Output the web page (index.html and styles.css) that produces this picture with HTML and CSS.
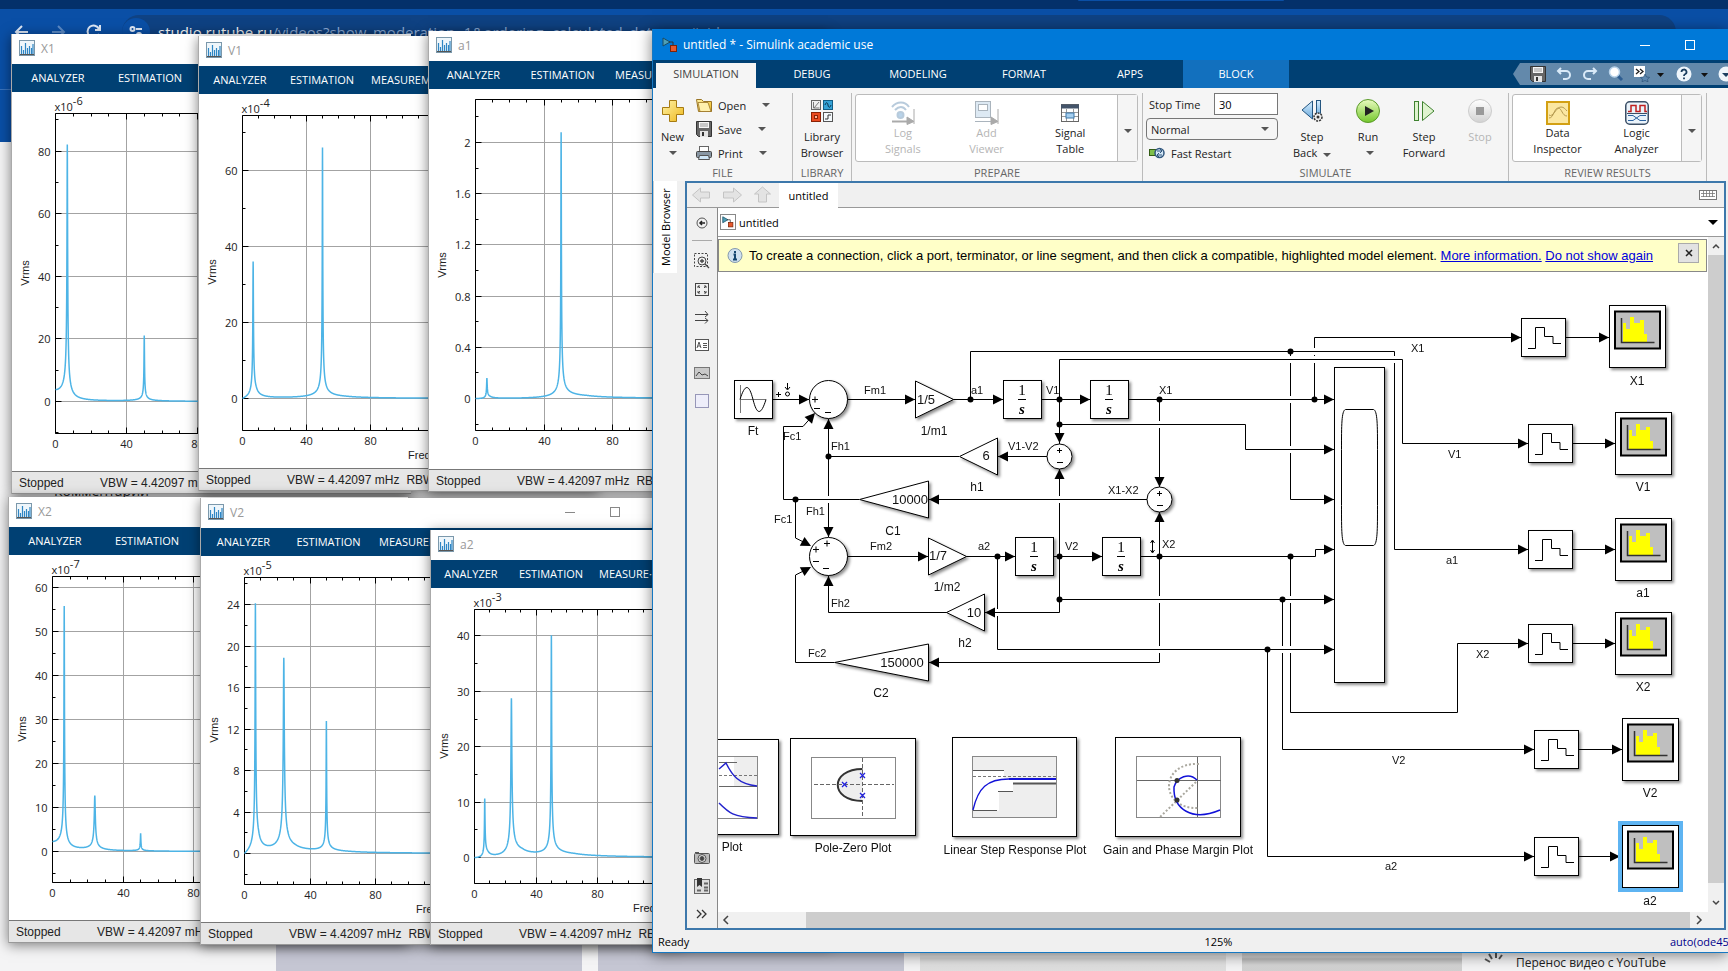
FILE: index.html
```html
<!DOCTYPE html>
<html lang="en">
<head>
    <meta charset="utf-8">
    <title>untitled * - Simulink academic use</title>
    <link rel="stylesheet" href="styles.css">
</head>
<body>
<!-- shared symbols -->
<svg class="defs" width="0" height="0" aria-hidden="true">
    <defs>
        <linearGradient id="gold" x1="0" y1="0" x2="1" y2="1"><stop offset="0" stop-color="#fff3a8"/><stop offset="1" stop-color="#eeb81c"/></linearGradient>
        <linearGradient id="green" x1="0" y1="0" x2="0" y2="1"><stop offset="0" stop-color="#e9fbc0"/><stop offset="1" stop-color="#74c82c"/></linearGradient>
        <linearGradient id="blue" x1="0" y1="0" x2="0" y2="1"><stop offset="0" stop-color="#d8efff"/><stop offset="1" stop-color="#6aa9dc"/></linearGradient>
        <linearGradient id="grey" x1="0" y1="0" x2="0" y2="1"><stop offset="0" stop-color="#ffffff"/><stop offset="1" stop-color="#d2d2d2"/></linearGradient>
        <filter id="drop" x="-20%" y="-20%" width="150%" height="150%"><feDropShadow dx="2" dy="2" stdDeviation="1.5" flood-color="#000" flood-opacity=".45"/></filter>
        <symbol id="spectrum" viewBox="0 0 16 16">
            <rect x=".5" y=".5" width="15" height="15" fill="#eef6fb" stroke="#7b98ab"/>
            <path d="M2.5 14V6M4.5 14v-4M6.5 14V3M8.5 14V8M10.5 14V6M12.5 14V8M14 14V4" stroke="#2f86c4" stroke-width="1.2"/>
            <path d="M1 14.5h14" stroke="#555"/>
        </symbol>
        <symbol id="model" viewBox="0 0 16 16">
            <path d="M1 1l7 4-7 4z" fill="#4f9fb5" stroke="#184d66"/>
            <path d="M7 5h4v4" fill="none" stroke="#333"/>
            <rect x="8.500" y="8.500" width="6" height="6" fill="#e8582c" stroke="#7c2408"/>
        </symbol>
        <symbol id="floppy" viewBox="0 0 16 16">
            <path d="M.5.5h15v15h-13l-2-2z" fill="#666" stroke="#333"/>
            <rect x="3" y="1" width="10" height="6" fill="#f5f5f5"/>
            <path d="M4 3h8M4 5h8" stroke="#999"/>
            <rect x="4" y="10" width="8" height="6" fill="#e5e5e5"/>
            <rect x="6" y="11" width="2" height="4" fill="#333"/>
        </symbol>
        <symbol id="integrator" viewBox="0 0 44 44" overflow="visible">
            <rect x=".5" y=".5" width="38" height="38" class="block"/>
            <path d="M15 19.500h8" class="thin"/>
            <text x="19" y="15" class="math">1</text>
            <text x="19" y="34" class="math italic">s</text>
        </symbol>
        <symbol id="hold" viewBox="0 0 50 44" overflow="visible">
            <rect x=".5" y=".5" width="44" height="38" class="block"/>
            <path d="M7 30.500h7.500v-21h9v9h8.500v7h8" class="thin"/>
        </symbol>
        <symbol id="analyzer" viewBox="0 0 62 68" overflow="visible">
            <rect x=".5" y=".5" width="56" height="62" class="block"/>
            <rect x="6" y="6.500" width="45" height="37" fill="#bfbfbf" stroke="#000" stroke-width="2"/>
            <path d="M14 37V18h3v6h4V12h4v6h6v-3h4v14h3v8z" fill="#ff0"/>
            <path d="M12.500 13v24.500h33" fill="none" stroke="#333" stroke-width="1.5"/>
        </symbol>
    </defs>
</svg>

<div class="desktop">

    <!-- browser in the background -->
    <div class="browser">
        <div class="tabstrip"><span class="browser-tab"></span></div>
        <div class="browser-bar">
            <svg width="110" height="36" viewBox="0 0 110 36" fill="none" stroke="#dfe9f7" stroke-width="2">
                <path d="M28 23H17M22 17l-6 6 6 6"/>
                <path d="M52 23h11M58 17l6 6-6 6" stroke="#5d8cc8"/>
                <path d="M99 20a6 6 0 1 0 0 5M100 16v5h-5"/>
            </svg>
            <div class="address">
                <span class="site"><svg width="14" height="14" viewBox="0 0 14 14" fill="none" stroke="#dfe9f7" stroke-width="2"><circle cx="3.500" cy="4" r="2"/><path d="M7 4h6M1 10h5"/><circle cx="10" cy="10" r="2"/></svg></span>
                <span>studio.rutube.ru<em>/videos?show_moderation=1&amp;ordering=calculated_date_asc#video</em></span>
            </div>
        </div>
    </div>
    <span class="comments">Комментарии</span>
    <div class="feed">
        <span class="thumb"></span>
        <span class="thumb"></span>
        <span class="thumb sheet"></span>
        <span class="thumb sheet"></span>
        <span class="transfer">
            <svg width="26" height="26" viewBox="0 0 26 26" stroke="#555" stroke-width="2"><path d="M3 14l5 3M7 9l3 5M14 8v5M20 10l-3 4"/></svg>
            Перенос видео с YouTube
        </span>
    </div>

    <!-- spectrum analyzer windows -->
    <section class="scope scope-x1">
        <header><svg width="16" height="16"><use href="#spectrum"/></svg>X1</header>
        <nav><button>ANALYZER</button><button>ESTIMATION</button></nav>
        <svg class="plot" data-plot="x1"></svg>
        <footer><span>Stopped</span><span>VBW = 4.42097 mHz</span></footer>
    </section>
    <section class="scope scope-v1">
        <header><svg width="16" height="16"><use href="#spectrum"/></svg>V1</header>
        <nav><button>ANALYZER</button><button>ESTIMATION</button><button>MEASUREMENTS</button></nav>
        <svg class="plot" data-plot="v1"></svg>
        <footer><span>Stopped</span><span>VBW = 4.42097 mHz</span><span>RBW</span></footer>
    </section>
    <section class="scope scope-a1">
        <header><svg width="16" height="16"><use href="#spectrum"/></svg>a1</header>
        <nav><button>ANALYZER</button><button>ESTIMATION</button><button>MEASUREMENTS</button></nav>
        <svg class="plot" data-plot="a1"></svg>
        <footer><span>Stopped</span><span>VBW = 4.42097 mHz</span><span>RBW</span></footer>
    </section>
    <section class="scope scope-x2">
        <header><svg width="16" height="16"><use href="#spectrum"/></svg>X2</header>
        <nav><button>ANALYZER</button><button>ESTIMATION</button><button>MEASUREMENTS</button></nav>
        <svg class="plot" data-plot="x2"></svg>
        <footer><span>Stopped</span><span>VBW = 4.42097 mHz</span></footer>
    </section>
    <section class="scope scope-v2">
        <header><svg width="16" height="16"><use href="#spectrum"/></svg>V2
            <span class="window-buttons">
                <svg width="45" height="30" fill="none" stroke="#888"><path d="M18 15.500h10"/></svg>
                <svg width="45" height="30" fill="none" stroke="#888"><rect x="18.500" y="10.500" width="9" height="9"/></svg>
                <svg width="45" height="30" fill="none" stroke="#888"><path d="M18 10l10 10M28 10L18 20"/></svg>
            </span>
        </header>
        <nav><button>ANALYZER</button><button>ESTIMATION</button><button>MEASUREMENTS</button></nav>
        <svg class="plot" data-plot="v2"></svg>
        <footer><span>Stopped</span><span>VBW = 4.42097 mHz</span><span>RBW</span></footer>
    </section>
    <section class="scope scope-a2">
        <header><svg width="16" height="16"><use href="#spectrum"/></svg>a2</header>
        <nav><button>ANALYZER</button><button>ESTIMATION</button><button>MEASURE···</button></nav>
        <svg class="plot" data-plot="a2"></svg>
        <footer><span>Stopped</span><span>VBW = 4.42097 mHz</span><span>RBW</span></footer>
    </section>

    <!-- simulink editor -->
    <main class="simulink">
        <header class="titlebar">
            <svg width="16" height="16"><use href="#model"/></svg>
            <span>untitled * - Simulink academic use</span>
            <span class="window-buttons">
                <svg width="45" height="30" fill="none" stroke="#fff"><path d="M18 15.500h10"/></svg>
                <svg width="45" height="30" fill="none" stroke="#fff"><rect x="18.500" y="10.500" width="9" height="9"/></svg>
            </span>
        </header>

        <nav class="tabs">
            <button class="active">SIMULATION</button>
            <button>DEBUG</button>
            <button>MODELING</button>
            <button>FORMAT</button>
            <button>APPS</button>
            <button class="block-tab">BLOCK</button>
            <div class="quick">
                <svg width="16" height="16"><use href="#floppy"/></svg>
                <svg width="16" height="16" viewBox="0 0 16 16" fill="none" stroke="#d9eaf8" stroke-width="2"><path d="M5 2L2 5l3 3M2 5h8a4 4 0 0 1 0 8H7"/></svg>
                <svg width="16" height="16" viewBox="0 0 16 16" fill="none" stroke="#d9eaf8" stroke-width="2"><path d="M11 2l3 3-3 3M14 5H6a4 4 0 0 0 0 8h3"/></svg>
                <svg width="16" height="16" viewBox="0 0 16 16"><path d="M9 9l5 5" stroke="#2d5d91" stroke-width="3"/><circle cx="6.500" cy="6" r="5" fill="#fff" stroke="#b9d3ea" stroke-width="1.5"/></svg>
                <svg width="32" height="16" viewBox="0 0 32 16"><rect width="11" height="11" fill="#fff"/><path d="M2 3l3 2.500L2 8M6 3l3 2.500L6 8" fill="none" stroke="#222" stroke-width="1.300"/><path d="M11 8l1.500 3 3 .3-2 2 .5 2.500-3-1.300-3 1.300.5-2.500-2-2 3-.3z" fill="#5c87b0" stroke="#23496f" stroke-width=".6"/><path d="M23 7h7l-3.500 4z" fill="#111"/></svg>
                <svg width="32" height="16" viewBox="0 0 32 16"><circle cx="8" cy="8" r="7.500" fill="#eef5fb"/><path d="M5.500 6a2.500 2.500 0 1 1 3.500 2.300c-.8.400-1 .8-1 1.700M8 11.500v1.700" fill="none" stroke="#1b3e60" stroke-width="1.800"/><path d="M25 7h7l-3.500 4z" fill="#111"/></svg>
                <svg width="16" height="16" viewBox="0 0 16 16"><circle cx="8" cy="8" r="7.500" fill="#eef5fb"/><path d="M4 7h8l-4 4z" fill="#1b3e60"/></svg>
            </div>
        </nav>

        <div class="ribbon">
            <section class="group file">
                <div class="tools">
                    <button class="tool new">
                        <svg width="22" height="22" viewBox="0 0 22 22"><path d="M7.500.5h7v7h7v7h-7v7h-7v-7h-7v-7h7z" fill="url(#gold)" stroke="#a67b12"/></svg>
                        <span>New</span><i class="caret"></i>
                    </button>
                    <div class="file-list">
                        <button><svg width="16" height="16" viewBox="0 0 16 16"><path d="M.5 2.500h5l2 2h8v10h-13z" fill="url(#gold)" stroke="#9a7526"/><path d="M2 5.500h10l3 9H4z" fill="#fff0ad" stroke="#9a7526" stroke-width=".8"/></svg>Open<i class="caret"></i></button>
                        <button><svg width="16" height="16"><use href="#floppy"/></svg>Save<i class="caret"></i></button>
                        <button><svg width="16" height="16" viewBox="0 0 16 16"><rect x="3.500" y="1.500" width="9" height="6" fill="#fff" stroke="#666"/><rect x=".5" y="6.500" width="15" height="6" rx="1" fill="#8896a3" stroke="#444"/><path d="M3.500 10.500h9l1 4h-11z" fill="#cfe6f7" stroke="#555"/></svg>Print<i class="caret"></i></button>
                    </div>
                </div>
                <h2>FILE</h2>
            </section>
            <section class="group library">
                <div class="tools">
                    <button class="tool">
                        <svg width="22" height="22" viewBox="0 0 22 22"><rect x=".5" y=".5" width="9" height="9" fill="#eee" stroke="#666"/><path d="M2.500 2v6h6M3 8l5-6" fill="none" stroke="#777"/><rect x="12.500" y=".5" width="9" height="9" fill="#35a2d6" stroke="#125e86"/><path d="M14 5c1-3 2.500-3 3 0s2 3 3 0" fill="none" stroke="#0b3550"/><rect x=".5" y="12.500" width="9" height="9" fill="#ea4a1f" stroke="#8b2206"/><rect x="3.500" y="15.500" width="3" height="3" fill="#ffb497" stroke="#8b2206"/><rect x="12.500" y="12.500" width="9" height="9" fill="#f4f9fc" stroke="#555"/><path d="M14 19h3v-4h3" fill="none" stroke="#333"/></svg>
                        <span>Library<br>Browser</span>
                    </button>
                </div>
                <h2>LIBRARY</h2>
            </section>
            <section class="group prepare">
                <div class="gallery">
                    <button class="tool" disabled>
                        <svg width="24" height="24" viewBox="0 0 24 24" fill="none" stroke="#b8cbdc" stroke-width="2"><path d="M1 6c5-6 13-6 17 0M4 9c4-4 8-4 11 0"/><circle cx="9.500" cy="14" r="3" fill="#b8d3ea"/><path d="M1 20.500h16" stroke="#aaa"/><path d="M16 16l7 4.500-7 3zM23 8v15" fill="#aaa" stroke="#aaa" stroke-width="1"/></svg>
                        <span>Log<br>Signals</span>
                    </button>
                    <button class="tool" disabled>
                        <svg width="24" height="24" viewBox="0 0 24 24" fill="none" stroke="#aab4bd"><rect x=".5" y=".5" width="15" height="16" fill="#dde9f3"/><rect x="3.500" y="3.500" width="9" height="6" fill="#fff"/><path d="M0 20.500h17"/><path d="M16 16l7 4.500-7 3zM23 8v15" fill="#aaa" stroke="#aaa"/></svg>
                        <span>Add<br>Viewer</span>
                    </button>
                    <button class="tool">
                        <svg width="24" height="24" viewBox="0 0 24 24"><rect x="3.500" y="3.500" width="17" height="17" fill="#fff" stroke="#666"/><path d="M3 5.500h18" stroke="#44546a" stroke-width="4"/><path d="M4 11.500h16M4 15.500h16M8.500 8v12M15.500 8v12" stroke="#999"/><rect x="8" y="12" width="8" height="5" fill="#a5cff0" stroke="#3c78aa"/></svg>
                        <span>Signal<br>Table</span>
                    </button>
                    <button class="more" aria-label="More"><i class="caret"></i></button>
                </div>
                <h2>PREPARE</h2>
            </section>
            <section class="group simulate">
                <div class="tools">
                    <div class="settings">
                        <div class="row"><label for="stop">Stop Time</label><input id="stop" type="text" value="30"></div>
                        <div class="select"><select aria-label="Simulation mode"><option>Normal</option></select><i class="caret"></i></div>
                        <button class="fast"><svg width="16" height="14" viewBox="0 0 16 14"><rect x=".5" y="3.500" width="6" height="6" fill="#7fc04a" stroke="#335c16"/><circle cx="10.500" cy="7" r="4.500" fill="#d4e8f7" stroke="#31577e" stroke-width="1.500"/><path d="M8 5h5M11 3l2 2-2 2M13 9H8M10 7L8 9l2 2" fill="none" stroke="#31577e"/></svg>Fast Restart</button>
                    </div>
                    <button class="tool">
                        <svg width="24" height="24" viewBox="0 0 24 24"><path d="M12.500 2v18L2 11z" fill="url(#blue)" stroke="#24557f"/><rect x="16.500" y="1.500" width="4" height="16" fill="url(#blue)" stroke="#24557f"/><circle cx="18" cy="18" r="4" fill="#eee" stroke="#333" stroke-width="1.500" stroke-dasharray="2 1"/><circle cx="18" cy="18" r="1.500" fill="#333"/></svg>
                        <span>Step<br>Back <i class="caret"></i></span>
                    </button>
                    <button class="tool">
                        <svg width="24" height="24" viewBox="0 0 24 24"><circle cx="12" cy="12" r="11.500" fill="url(#green)" stroke="#5a9a2a"/><path d="M9 7l9 5-9 5z" fill="#222"/></svg>
                        <span>Run</span><i class="caret"></i>
                    </button>
                    <button class="tool">
                        <svg width="24" height="24" viewBox="0 0 24 24"><rect x="2.500" y="2.500" width="4" height="19" fill="#dff3cf" stroke="#3f8230"/><path d="M10.500 2.500v19L22 12z" fill="#dff3cf" stroke="#3f8230"/></svg>
                        <span>Step<br>Forward</span>
                    </button>
                    <button class="tool" disabled>
                        <svg width="24" height="24" viewBox="0 0 24 24"><circle cx="12" cy="12" r="11.500" fill="url(#grey)" stroke="#ccc"/><rect x="8" y="8" width="8" height="8" fill="#999"/></svg>
                        <span>Stop</span>
                    </button>
                </div>
                <h2>SIMULATE</h2>
            </section>
            <section class="group review">
                <div class="gallery">
                    <button class="tool">
                        <svg width="24" height="24" viewBox="0 0 24 24"><rect x="1" y="1" width="22" height="22" fill="#fbe7a1" stroke="#d3a013" stroke-width="2"/><path d="M3 17c5 0 5-10 9-10s4 8 9 8M3 14c4 3 7-8 12-8 3 0 4 2 6 4" fill="none" stroke="#b59a50"/></svg>
                        <span>Data<br>Inspector</span>
                    </button>
                    <button class="tool">
                        <svg width="24" height="24" viewBox="0 0 24 24" fill="none"><rect x=".75" y=".75" width="22.500" height="22.500" rx="4" fill="#eaf3fa" stroke="#3c4f66" stroke-width="1.500"/><path d="M3 10.500h3v-6h5v6h4v-6h5v6h2" stroke="#c02020" stroke-width="1.500"/><path d="M2 12.500h20" stroke="#3c4f66"/><path d="M3 14.500h5l7 5h6M3 19.500h5l7-5h6" stroke="#2b62a0"/></svg>
                        <span>Logic<br>Analyzer</span>
                    </button>
                    <button class="more" aria-label="More"><i class="caret"></i></button>
                </div>
                <h2>REVIEW RESULTS</h2>
            </section>
        </div>

        <div class="body">
            <aside class="browser-pane"><button>Model Browser</button></aside>
            <div class="editor">
                <div class="doc-tabs">
                    <svg width="92" height="22" viewBox="0 0 92 22" fill="#e3e3e3" stroke="#c4c4c4"><path d="M5.500 11l8-7v4h9v6h-9v4z"/><path d="M54.500 11l-8-7v4h-10v6h10v4z"/><path d="M75.500 3l8 7h-4v8h-8v-8h-4z"/></svg>
                    <button>untitled</button>
                    <svg class="keyboard" width="18" height="10" viewBox="0 0 18 10" fill="#fff" stroke="#777"><rect x=".5" y=".5" width="17" height="9"/><path d="M2 3.500h14M2 6.500h14M4.500 1v6M7.500 1v6M10.500 1v6M13.500 1v6" stroke-width=".8"/></svg>
                </div>
                <div class="work">
                    <div class="palette">
                        <svg width="16" height="16" viewBox="0 0 16 16" fill="none" stroke="#555"><circle cx="8" cy="8" r="5"/><path d="M11 8H6M8 6L6 8l2 2" stroke="#222" stroke-width="1.500"/></svg>
                        <hr>
                        <svg width="16" height="16" viewBox="0 0 16 16" fill="none" stroke="#444"><rect x=".5" y=".5" width="13" height="13" stroke-dasharray="2 1.500"/><circle cx="8" cy="8" r="4" fill="#eee"/><path d="M8 6v4M6 8h4M11 11l4 4" stroke-width="1.300"/></svg>
                        <svg width="16" height="16" viewBox="0 0 16 16" fill="none" stroke="#444"><rect x="1.500" y="2.500" width="13" height="12"/><path d="M4 5l2 2M12 5l-2 2M4 12l2-2M12 12l-2-2M4 7V5h2M10 5h2v2M4 10v2h2M10 12h2v-2"/></svg>
                        <svg width="16" height="16" viewBox="0 0 16 16" fill="none" stroke="#444"><path d="M1 5.500h13M11 2l3 3.500L11 8M1 11.500h13M11 9l3 2.500-3 3"/></svg>
                        <svg width="16" height="16" viewBox="0 0 16 16" fill="none" stroke="#555"><rect x="1.500" y="2.500" width="13" height="11" fill="#fff"/><path d="M3 11l2-6 2 6M4 9h2M9 6.500h4M9 8.500h4M9 10.500h4"/></svg>
                        <svg width="16" height="16" viewBox="0 0 16 16" fill="none" stroke="#777"><rect x=".5" y="2.500" width="15" height="11" fill="#c9c9c9"/><path d="M2 11l3-4 3 3 3-1 3 2" stroke="#444"/></svg>
                        <svg width="16" height="16" viewBox="0 0 16 16"><rect x="1.500" y="1.500" width="13" height="13" fill="#eeeefa" stroke="#9797b8"/></svg>
                        <span class="fill"></span>
                        <svg width="16" height="16" viewBox="0 0 16 16" fill="#bbb" stroke="#555"><rect x=".5" y="3.500" width="15" height="10" rx="1"/><circle cx="8" cy="8.500" r="4" fill="#ddd"/><circle cx="8" cy="8.500" r="2" fill="#444"/><path d="M1 2.500h4"/></svg>
                        <svg width="16" height="16" viewBox="0 0 16 16" fill="#ddd" stroke="#666"><rect x=".5" y="1.500" width="15" height="14"/><path d="M3 0h5v9L5.500 7 3 9z" fill="#333" stroke="none"/><path d="M10 5.500h4M10 9.500h4M3 12.500h4M10 12.500h4" stroke-width="2"/></svg>
                        <svg width="16" height="16" viewBox="0 0 16 16" fill="none" stroke="#333" stroke-width="1.300"><path d="M3 4l4 4-4 4M8 4l4 4-4 4"/></svg>
                    </div>
                    <div class="view">
                        <div class="crumbs">
                            <span class="crumb-icon"><svg width="12" height="12"><use href="#model"/></svg></span>
                            <span>untitled</span>
                            <i class="caret"></i>
                        </div>
                        <div class="pane">
                            <div class="canvas">
                                <div class="notice">
                                    <svg width="16" height="16" viewBox="0 0 16 16"><circle cx="8" cy="7.500" r="7" fill="#cfe0ee" stroke="#8399ad"/><path d="M8 3v2M6.500 6.500H8V11M6 11.500h4" stroke="#15466f" stroke-width="2" fill="none"/></svg>
                                    <p>To create a connection, click a port, terminator, or line segment, and then click a compatible, highlighted model element. <a href="#">More information.</a> <a href="#">Do not show again</a></p>
                                    <button aria-label="Close"><svg width="8" height="8" viewBox="0 0 8 8" stroke="#222" stroke-width="1.500"><path d="M1 1l6 6M7 1L1 7"/></svg></button>
                                </div>
                                <svg class="diagram" width="988" height="638" viewBox="718 273 988 638">
                                    <!-- vertical wires -->
                                    <path class="wire" d="M970.500 399.500v-48M1059.500 444v-84.500M1059.500 469v143.500M1159.500 399.500V487M1159.500 512v150.500M828.500 419v118M1290.500 351.500v148M1290.500 556.500v156M1314.500 399.500v-62M1394.500 351.500v198M1402.500 359.500v84M1282.500 599.500v150M1267.500 649.500V856.500M997.500 556.500v93M1245.500 424.500v25M1457.500 712.500v-69M1315.500 556.500v-7M783.500 499.500v-73M795.500 499.500V538M795.500 662.500V575M828.500 612.500V575"/>
                                    <path class="gap" d="M828.500 496v7M1159.500 421v7M1290.500 356v7M1290.500 396v7M1290.500 446v7M1314.500 348v7M1314.500 356v7M1394.500 356v7M1290.500 596v7M1290.500 646v7M1282.500 646v7M1159.500 596v7M1159.500 646v7M1059.500 496v7M997.500 609v7"/>
                                    <!-- horizontal wires -->
                                    <path class="wire" d="M773 399.500h36M847 399.500h68M953 399.500h50M1042 399.500h48M1129 399.500h205M970.500 351.500h424M1059.500 359.500h343M1059.500 424.500h186M1245.500 449.500H1334M1290.500 499.500H1334M1315.500 549.500H1334M1059.500 599.500H1334M997.500 649.500H1334M1314.500 337.500H1521M1402.500 443.500H1528M1394.500 549.500H1528M1290.500 712.500h167M1457.500 643.500H1528M1282.500 749.500H1534M1267.500 856.500H1534M1047 456.500h-50M959 456.500H828.500M1147 499.500H929M859 499.500h-75.500M847 556.500h81M966 556.500h50M1054 556.500h48M1141 556.500h174.500M1059.500 612.500H985M947 612.500H828.500M1159.500 662.500H929M834 662.500h-38.500M783.500 426.500H803l8-9M795.500 538l8 4M795.500 575l8-4M1566 337.500h43M1573 443.500h42M1573 549.500h42M1573 643.500h42M1579 749.500h43M1579 856.500h43"/>
                                    <!-- arrow heads, filled in by script.js -->
                                    <g id="arrows"></g>
                                    <g id="junctions"></g>

                                    <g class="shapes" filter="url(#drop)">
                                        <rect x="734.500" y="380.500" width="38" height="38" class="block"/>
                                        <circle cx="828.500" cy="399.500" r="19" class="block"/>
                                        <circle cx="828.500" cy="556.500" r="19" class="block"/>
                                        <circle cx="1059.500" cy="456.500" r="12.500" class="block"/>
                                        <circle cx="1159.500" cy="499.500" r="12.500" class="block"/>
                                        <path class="block" d="M915.500 381v37l38-18.500zM928.500 538v37l38-18.500zM997.500 438v37l-38-18.500zM984.500 594v37l-38-18.500zM928.500 481v37l-69-18.500zM928.500 644v37l-94-18.500z"/>
                                        <rect x="1334.500" y="367.500" width="50" height="315" class="block"/>
                                        <use href="#integrator" x="1003" y="380" width="44" height="44"/>
                                        <use href="#integrator" x="1090" y="380" width="44" height="44"/>
                                        <use href="#integrator" x="1015" y="537" width="44" height="44"/>
                                        <use href="#integrator" x="1102" y="537" width="44" height="44"/>
                                        <use href="#hold" x="1521" y="318" width="50" height="44"/>
                                        <use href="#hold" x="1528" y="424" width="50" height="44"/>
                                        <use href="#hold" x="1528" y="530" width="50" height="44"/>
                                        <use href="#hold" x="1528" y="624" width="50" height="44"/>
                                        <use href="#hold" x="1534" y="730" width="50" height="44"/>
                                        <use href="#hold" x="1534" y="837" width="50" height="44"/>
                                        <use href="#analyzer" x="1609" y="305" width="62" height="68"/>
                                        <use href="#analyzer" x="1615" y="412" width="62" height="68"/>
                                        <use href="#analyzer" x="1615" y="518" width="62" height="68"/>
                                        <use href="#analyzer" x="1615" y="612" width="62" height="68"/>
                                        <use href="#analyzer" x="1622" y="718" width="62" height="68"/>
                                        <rect x="653.500" y="739.500" width="125" height="95" class="block"/>
                                        <rect x="790.500" y="738.500" width="125" height="97" class="block"/>
                                        <rect x="952.500" y="737.500" width="124" height="99" class="block"/>
                                        <rect x="1115.500" y="737.500" width="125" height="99" class="block"/>
                                    </g>
                                    <rect x="1620" y="823" width="61" height="67" fill="none" stroke="#5eb4f2" stroke-width="4"/>
                                    <use href="#analyzer" x="1622" y="825" width="62" height="68"/>

                                    <!-- sine source and scope faces -->
                                    <path d="M740.500 385v28M740 399.500h26" stroke="#777" fill="none"/>
                                    <path class="thin" d="M740 399.500c5-16 9-16 13 0s8 16 13 0"/>
                                    <path class="thin" d="M1345.500 409.500h28c4 1 4 16 4 40v56c0 24 0 39-4 40h-28c-4-1-4-16-4-40v-56c0-24 0-39 4-40z"/>
                                    <path class="thin" d="M776 394.500h5M778.500 392v5M787.500 383v6M785 387l2.500 3 2.500-3M1152.500 541v11M1150.500 543l2-3 2 3M1150.500 550l2 3 2-3"/>
                                    <circle cx="787.500" cy="394" r="2" class="thin"/>

                                    <!-- sum signs -->
                                    <path class="thin" d="M812 399.500h6M815 396.500v6M814 408.500h6M825 412.500h6M813 549.500h6M816 546.500v6M824 543.500h6M827 540.500v6M813 561.500h6M823 568.500h6M1057 450.500h5M1059.500 448v5M1057 462.500h6M1157 493.500h5M1159.500 491v5M1157 505.500h6"/>

                                    <!-- bode plot -->
                                    <rect x="700" y="756.500" width="57.500" height="62" fill="#fff" stroke="#888"/>
                                    <path d="M734 757h23v29h-23z" fill="#eee"/><path d="M719 762.500h18M719 786.500h38" stroke="#666" fill="none"/><path d="M719 775.500h38" stroke="#777" stroke-dasharray="3 2"/>
                                    <path d="M719 769l7-6c6 12 12 21 31 23M719 803c10 10 14 14 38 15" stroke="#22c" stroke-width="1.500" fill="none"/>

                                    <!-- pole-zero plot -->
                                    <rect x="811.500" y="757.500" width="84" height="61" fill="#fff" stroke="#888"/>
                                    <path d="M862.500 769c-33 0-33 32 0 32z" fill="#eee"/><path d="M862.500 769c-33 0-33 32 0 32" fill="none" stroke="#333" stroke-width="2"/>
                                    <path d="M862.500 758v60M814 784.500h80" stroke="#666" stroke-dasharray="4 2"/>
                                    <path d="M860 773l5 5M865 773l-5 5M860 793l5 5M865 793l-5 5M842 782l5 5M847 782l-5 5" stroke="#22d" stroke-width="1.300"/>

                                    <!-- linear step response plot -->
                                    <rect x="972.500" y="756.500" width="84" height="61" fill="#eee" stroke="#888"/>
                                    <path d="M973 770.500h31v8h52v5h-43v8h-14v19h-26z" fill="#fff"/>
                                    <path d="M973 770.500h31M973 810.500h24M998 791.500h15" stroke="#555"/><path d="M1013 783.500h43" stroke="#555" stroke-width="2"/><path d="M973 776.500h83" stroke="#777" stroke-dasharray="3 2"/>
                                    <path d="M973 810c5-22 14-31 36-31" stroke="#1111d8" stroke-width="1.300" fill="none"/><path d="M1009 779h47" stroke="#1111d8" stroke-width="2"/>

                                    <!-- gain and phase margin plot -->
                                    <rect x="1136.500" y="756.500" width="84" height="61" fill="#fff" stroke="#888"/>
                                    <path d="M1197.500 757v60M1137 780.500h84" stroke="#666"/>
                                    <path d="M1199 764c-40-2-40 46 0 44M1196 782l-36 35" stroke="#aaa89f" stroke-width="2" stroke-dasharray="2 2" fill="none"/>
                                    <path d="M1197 780c-8-8-20-3-23 7-1 22 18 35 46 23" stroke="#1111d8" stroke-width="1.500" fill="none"/>
                                    <circle cx="1177" cy="780.500" r="2.500" fill="#333"/><circle cx="1177" cy="800" r="2.500" fill="#333"/>

                                    <!-- gain values -->
                                    <g class="value">
                                        <text x="926" y="404">1/5</text><text x="938" y="560">1/7</text>
                                        <text x="986" y="460">6</text><text x="974" y="617">10</text>
                                        <text x="910" y="504">10000</text><text x="902" y="667">150000</text>
                                    </g>
                                    <g class="name">
                                        <text x="753" y="435">Ft</text><text x="934" y="435">1/m1</text><text x="977" y="491">h1</text>
                                        <text x="893" y="535">C1</text><text x="947" y="591">1/m2</text><text x="965" y="647">h2</text>
                                        <text x="881" y="697">C2</text>
                                        <text x="1637" y="385">X1</text><text x="1643" y="491">V1</text><text x="1643" y="597">a1</text>
                                        <text x="1643" y="691">X2</text><text x="1650" y="797">V2</text><text x="1650" y="905">a2</text>
                                        <text x="732" y="851">Plot</text><text x="853" y="852">Pole-Zero Plot</text>
                                        <text x="1015" y="854">Linear Step Response Plot</text><text x="1178" y="854">Gain and Phase Margin Plot</text>
                                    </g>
                                    <g class="signal">
                                        <text x="864" y="394">Fm1</text><text x="971" y="394">a1</text><text x="1046" y="394">V1</text><text x="1159" y="394">X1</text>
                                        <text x="783" y="440">Fc1</text><text x="831" y="450">Fh1</text><text x="1008" y="450">V1-V2</text>
                                        <text x="806" y="515">Fh1</text><text x="774" y="523">Fc1</text><text x="1108" y="494">X1-X2</text>
                                        <text x="870" y="550">Fm2</text><text x="978" y="550">a2</text><text x="1065" y="550">V2</text><text x="1162" y="548">X2</text>
                                        <text x="831" y="607">Fh2</text><text x="808" y="657">Fc2</text>
                                        <text x="1411" y="352">X1</text><text x="1448" y="458">V1</text><text x="1446" y="564">a1</text>
                                        <text x="1476" y="658">X2</text><text x="1392" y="764">V2</text><text x="1385" y="870">a2</text>
                                    </g>
                                </svg>
                            </div>
                            <div class="vscroll">
                                <svg width="16" height="18" fill="none" stroke="#444" stroke-width="1.500"><path d="M5 11l3-3 3 3"/></svg>
                                <span></span>
                                <svg width="16" height="18" fill="none" stroke="#444" stroke-width="1.500"><path d="M5 7l3 3 3-3"/></svg>
                            </div>
                        </div>
                        <div class="hscroll">
                            <svg width="18" height="16" fill="none" stroke="#444" stroke-width="1.500"><path d="M10 4L6 8l4 4"/></svg>
                            <span></span>
                            <svg width="18" height="16" fill="none" stroke="#444" stroke-width="1.500"><path d="M7 4l4 4-4 4"/></svg>
                        </div>
                    </div>
                </div>
            </div>
        </div>

        <footer class="statusbar">
            <span>Ready</span>
            <span>125%</span>
            <a href="#">auto(ode45)</a>
        </footer>
    </main>
</div>
<script src="script.js"></script>
</body>
</html>
```

FILE: styles.css
```css
* {
    box-sizing: border-box;
}

body {
    margin: 0;
    font-family: "Open Sans", "Noto Sans", sans-serif;
    font-size: 11px;
    color: #222;
}

button {
    font: inherit;
    color: inherit;
    background: none;
    border: 0;
    padding: 0;
}

svg {
    display: block;
    flex: none;
}

.defs {
    position: absolute;
}

.desktop {
    position: relative;
    height: 100vh;
    overflow: hidden;
    background: #f4f4f5;
}

.caret {
    display: inline-block;
    border: 4px solid transparent;
    border-top-color: #555;
    border-bottom: 0;
}

/* background browser */

.browser {
    height: 142px;
    background: #0a4fa6;
}

.tabstrip {
    display: flex;
    height: 9px;
    background: #04306a;
}

.browser-tab {
    width: 206px;
    margin-left: 1078px;
    background: #0a4fa6;
    border-radius: 0 0 8px 8px;
    height: 1px;
}

.browser-bar {
    display: flex;
    padding: 6px 52px 0 0;
    height: 81px;
    border-bottom: 1px solid #3a73bd;
    color: #fff;
    font-size: 15px;
}

.browser-bar > svg {
    margin-right: 12px;
    margin-top: -6px;
}

.address {
    flex: 1;
    display: flex;
    align-items: center;
    gap: 8px;
    height: 34px;
    border-radius: 17px;
    background: #0f4283;
    white-space: nowrap;
}

.address em {
    font-style: normal;
    color: #8fb0dc;
}

.site {
    display: grid;
    place-items: center;
    width: 28px;
    height: 28px;
    border-radius: 50%;
    background: #0a4fa6;
}

.comments {
    position: absolute;
    left: 54px;
    top: 481px;
    font-size: 14px;
}

.feed {
    position: absolute;
    left: 276px;
    right: 0;
    bottom: 0;
    height: 40px;
    display: flex;
    gap: 16px;
}

.thumb {
    width: 306px;
    background: #c5c6d3;
}

.thumb.sheet {
    background: linear-gradient(#e6e6e6 26px, #d9d9d9 27px, #e3e3e3 32px, #dedede);
}

.thumb.sheet + .sheet {
    width: 220px;
    background: linear-gradient(#d8d8d8 26px, #bebebe 28px, #d6d6d6 34px, #d0d0d0);
}

.transfer {
    display: flex;
    align-items: flex-end;
    gap: 8px;
    margin-left: auto;
    width: 246px;
    font-size: 12px;
    line-height: 16px;
    white-space: nowrap;
}

/* analyzer windows */

.scope {
    position: absolute;
    display: flex;
    flex-direction: column;
    width: 400px;
    background: #fff;
    border-left: 1px solid #aaa;
    box-shadow: 0 2px 12px rgba(0, 0, 0, .5);
}

.scope header {
    display: flex;
    align-items: center;
    gap: 6px;
    height: 30px;
    padding: 0 0 2px 7px;
    font-size: 12px;
    color: #999;
}

.window-buttons {
    display: flex;
    margin-left: auto;
}

.scope nav {
    display: flex;
    height: 28px;
    background: #004073;
    color: #fff;
}

.scope nav button {
    width: 89px;
    padding-bottom: 2px;
}

.scope nav button:nth-child(3) {
    width: auto;
    padding-left: 8px;
}

.plot {
    width: 100%;
}

.scope footer {
    display: flex;
    height: 23px;
    align-items: center;
    padding-left: 7px;
    background: #e6e6e6;
    border-top: 1px solid #777;
    border-bottom: 1px solid #999;
    font: 12px "Liberation Sans", Arial, sans-serif;
    white-space: nowrap;
}

.scope footer span:first-child {
    width: 81px;
}

.scope footer span:nth-child(3) {
    margin-left: 7px;
}

.scope-x1 { left: 11px; top: 34px; }
.scope-v1 { left: 198px; top: 36px; }
.scope-a1 { left: 428px; top: 31px; }
.scope-x2 { left: 8px; top: 497px; }
.scope-v2 { left: 200px; top: 498px; width: 482px; }
.scope-a2 { left: 430px; top: 530px; }

.scope-x1 nav button, .scope-x2 nav button { width: 92px; }
.scope-v1 nav button { width: 82px; }
.scope-v2 nav button { width: 85px; }
.scope-a2 nav button { width: 80px; }

.scope-x1 .plot { height: 379px; }
.scope-v1 .plot { height: 374px; }
.scope-a1 .plot { height: 380px; }
.scope-x2 .plot { height: 365px; }
.scope-v2 .plot { height: 366px; }
.scope-a2 .plot { height: 334px; }

.plot .grid {
    stroke: #a3a3a3;
    fill: none;
}

.plot .axis {
    stroke: #000;
    fill: none;
}

.plot .curve {
    stroke: #4db4e6;
    stroke-width: 1.5px;
    fill: none;
}

.plot text {
    font-size: 11px;
    fill: #222;
}

.plot .unit {
    font-family: "Liberation Sans", Arial, sans-serif;
    text-anchor: middle;
}

.plot .freq {
    font-family: "Liberation Sans", Arial, sans-serif;
}

/* simulink window */

.simulink {
    position: absolute;
    left: 652px;
    right: 0;
    top: 29px;
    bottom: 18px;
    display: flex;
    flex-direction: column;
    overflow: hidden;
    background: #f0f0f0;
    border-left: 1px solid #1678c2;
    border-bottom: 1px solid #1678c2;
    box-shadow: 0 2px 14px rgba(0, 0, 0, .5);
}

.titlebar {
    display: flex;
    flex: none;
    align-items: center;
    gap: 5px;
    height: 31px;
    padding-left: 9px;
    background: #0079d8;
    color: #fff;
    font-size: 12px;
}

.titlebar .window-buttons {
    margin-right: 16px;
}

.tabs {
    display: flex;
    flex: none;
    height: 28px;
    background: #004073;
    color: #fff;
}

.tabs button {
    width: 106px;
    padding-bottom: 2px;
}

.tabs .active {
    width: 100px;
    margin: 3px 3px 0;
    padding-bottom: 4px;
    background: #f5f5f5;
    color: #444;
}

.tabs .block-tab {
    background: #1270be;
}

.quick {
    display: flex;
    align-items: center;
    gap: 10px;
    width: 215px;
    height: 22px;
    margin: 3px 0 0 auto;
    padding-left: 17px;
    background: #6389ab;
    clip-path: polygon(0 50%, 7px 0, 100% 0, 100% 100%, 7px 100%);
}

.ribbon {
    display: flex;
    flex: none;
    height: 93px;
    padding-top: 5px;
    background: #f5f5f5;
}

.group {
    display: flex;
    flex: none;
    flex-direction: column;
    border-right: 1px solid #bbb;
}

.group h2 {
    margin: auto 0 0;
    font-size: 11px;
    line-height: 16px;
    font-weight: normal;
    color: #666;
    text-align: center;
}

.file { width: 140px; }
.library { width: 59px; }
.prepare { width: 291px; }
.simulate { width: 366px; }
.review { width: 198px; }

.tools {
    display: flex;
}

.tool {
    display: flex;
    flex-direction: column;
    align-items: center;
    padding-top: 6px;
    line-height: 16px;
    white-space: nowrap;
}

.tool svg {
    height: 24px;
    margin-bottom: 6px;
}

.tool > .caret {
    margin-top: 6px;
}

.tool:disabled {
    color: #b5b5b5;
}

.new {
    width: 39px;
}

.library .tool {
    width: 59px;
}

.file-list {
    display: flex;
    flex-direction: column;
    padding-left: 4px;
}

.file-list button {
    display: flex;
    align-items: center;
    gap: 6px;
    height: 24px;
}

.file-list .caret {
    margin-left: 10px;
}

.gallery {
    display: flex;
    height: 68px;
    margin: 1px 4px 0 3px;
    padding-left: 5px;
    background: #fff;
    border: 1px solid #bbb;
    border-radius: 3px;
}

.gallery .tool {
    flex: 1;
    padding-top: 6px;
}

.gallery .tool svg {
    margin-bottom: 0;
}

.more {
    width: 20px;
    margin-left: 5px;
    background: #f5f5f5;
    border-left: 1px solid #bbb;
}

.settings {
    display: flex;
    flex-direction: column;
    gap: 3px;
    width: 141px;
    padding-left: 3px;
}

.row {
    display: flex;
    align-items: center;
    justify-content: space-between;
    padding-left: 3px;
}

.row,
.select {
    width: 132px;
}

.settings input {
    width: 64px;
    height: 22px;
    padding: 0 4px;
    font: inherit;
    border: 1px solid #777;
}

.select {
    display: flex;
    align-items: center;
    height: 22px;
    padding-right: 8px;
    border: 1px solid #777;
    border-radius: 4px;
}

.select select {
    flex: 1;
    appearance: none;
    font: inherit;
    color: inherit;
    background: none;
    border: 0;
    padding: 0 4px;
}

.fast {
    display: flex;
    align-items: center;
    gap: 6px;
    height: 20px;
    padding-left: 3px;
}

.simulate .tool {
    width: 56px;
}

.simulate .tool .caret {
    margin-left: 3px;
}

/* editor */

.body {
    display: flex;
    flex: 1;
    min-height: 0;
}

.browser-pane {
    width: 32px;
}

.browser-pane button {
    width: 24px;
    height: 92px;
    background: #fff;
    border-right: 1px solid #ccc;
    writing-mode: vertical-rl;
    transform: rotate(180deg);
    color: #000;
    font-size: 11px;
}

.editor {
    display: flex;
    flex: 1;
    flex-direction: column;
    min-width: 0;
    margin-right: 2px;
    border: 2px solid #3d78ab;
}

.doc-tabs {
    display: flex;
    align-items: center;
    height: 25px;
    border-bottom: 1px solid #999;
    color: #000;
}

.doc-tabs button {
    width: 59px;
    height: 25px;
    background: #fff;
}

.keyboard {
    margin: 0 7px 0 auto;
}

.work {
    display: flex;
    flex: 1;
    min-height: 0;
}

.palette {
    display: flex;
    flex-direction: column;
    align-items: center;
    gap: 12px;
    width: 31px;
    padding: 7px 0 6px;
    border-right: 1px solid #888;
}

.palette hr {
    width: 20px;
    margin: -3px 0 0;
    border: 0;
    border-top: 1px solid #aaa;
}

.fill {
    flex: 1;
}

.view {
    display: flex;
    flex: 1;
    flex-direction: column;
    min-width: 0;
}

.crumbs {
    display: flex;
    align-items: center;
    gap: 3px;
    height: 29px;
    padding: 0 6px 0 2px;
    background: #fff;
    border-bottom: 1px solid #999;
    color: #000;
}

.crumb-icon {
    padding: 1px;
    border: 1px solid #888;
}

.crumbs .caret {
    margin-left: auto;
    border-width: 5px;
    border-bottom: 0;
    border-top-color: #000;
}

.pane {
    display: flex;
    flex: 1;
    min-height: 0;
    background: #fff;
}

.canvas {
    flex: 1;
    min-width: 0;
    overflow: hidden;
}

.notice {
    display: flex;
    align-items: center;
    gap: 6px;
    height: 33px;
    margin: 2px 1px 1px 0;
    padding: 0 7px 0 8px;
    background: #ffffc8;
    border: 1px solid #888;
    font: 13px "Liberation Sans", Arial, sans-serif;
    color: #000;
}

.notice p {
    flex: 1;
    margin: 0;
    white-space: nowrap;
}

.notice a {
    color: #00d;
}

.notice button {
    display: grid;
    place-items: center;
    width: 21px;
    height: 20px;
    margin-bottom: 6px;
    background: #e2e2e2;
    border: 1px solid #aaa;
}

.vscroll {
    display: flex;
    flex-direction: column;
    width: 16px;
    background: #f0f0f0;
}

.vscroll span {
    flex: 1;
    margin-bottom: 11px;
    background: #cdcdcd;
}

.hscroll {
    display: flex;
    height: 16px;
    padding-right: 16px;
    background: #f0f0f0;
}

.hscroll span {
    flex: 1;
    margin-left: 70px;
    background: #cdcdcd;
}

.statusbar {
    display: grid;
    grid-template-columns: 54fr 46fr 58px;
    flex: none;
    align-items: center;
    height: 22px;
    padding-left: 5px;
    color: #000;
}

.statusbar a {
    color: #00008b;
    text-decoration: none;
}

/* block diagram */

.wire,
.thin {
    fill: none;
    stroke: #000;
}

.gap {
    stroke: #fff;
    stroke-width: 3px;
}

.block {
    fill: #fff;
    stroke: #000;
}

.diagram text {
    font-family: "Liberation Sans", Arial, sans-serif;
    fill: #111;
}

.signal text {
    font-size: 11px;
}

.name text {
    font-size: 12px;
    text-anchor: middle;
}

.value text {
    font-size: 13px;
    text-anchor: middle;
}

.math {
    font: 15px "Liberation Serif", serif;
    text-anchor: middle;
}

.math.italic {
    font-style: italic;
    font-weight: bold;
}
```

FILE: script.js
```js
// x: pixel of 0 Hz, dx: pixels per 40 Hz, zero: pixel of y = 0, dy: pixels per major step
// peaks: [frequency, amplitude, half width], order: 0 displacement, 1 velocity, 2 acceleration
const plots = {
    x1: { x: 43.5, dx: 71, top: 21.5, bottom: 341.5, zero: 309.5, step: 20, dy: 62.6, exp: '-6', unit: 181, order: 0,
          peaks: [[6.65, 82, 0.15], [50, 21, 0.12]] },
    v1: { x: 43.5, dx: 64, top: 21.5, bottom: 336.5, zero: 304.5, step: 20, dy: 76, exp: '-4', unit: 178, freq: 209, order: 1,
          peaks: [[6.65, 36, 0.15], [50, 66, 0.12]] },
    a1: { x: 46.5, dx: 68.5, top: 10.5, bottom: 341.5, zero: 309.5, step: 0.4, dy: 51.2, exp: '', unit: 176, order: 2,
          peaks: [[6.65, 0.16, 0.15], [50, 2.08, 0.12]] },
    x2: { x: 43.5, dx: 70.5, top: 21.5, bottom: 327.5, zero: 296.5, step: 10, dy: 44, exp: '-7', unit: 174, order: 0,
          peaks: [[6.65, 55.5, 0.12], [24, 12.5, 0.25], [50, 4, 0.12]] },
    v2: { x: 43.5, dx: 65.5, top: 21.5, bottom: 328.5, zero: 297.5, step: 4, dy: 41.5, exp: '-5', unit: 174, freq: 215, order: 1,
          peaks: [[6.65, 24, 0.15], [24, 18.7, 0.25], [50, 12.6, 0.12]] },
    a2: { x: 43.5, dx: 61.5, top: 21.5, bottom: 295.5, zero: 269.5, step: 10, dy: 55.4, exp: '-3', unit: 158, freq: 202, order: 2,
          peaks: [[6.65, 10.6, 0.15], [24, 28.6, 0.25], [50, 39.8, 0.15]] }
};

function level(f, p) {
    let sum = 0;
    for (const [f0, a, w] of p.peaks) {
        const d = (f * f - f0 * f0) / (2 * f0);
        const gain = Math.pow(Math.min(f / f0, 1.3), p.order);
        sum += a * gain * w / Math.sqrt(w * w + d * d);
    }
    return sum;
}

function snap(v) {
    return Math.floor(v) + 0.5;
}

function drawPlot(svg) {
    const p = plots[svg.dataset.plot];
    const right = svg.clientWidth;
    let grid = '', axis = `M${right} ${p.top}H${p.x}V${p.bottom}H${right}`, text = '';

    for (let i = 0; p.x + i * p.dx / 4 < right; i++) {
        const x = snap(p.x + i * p.dx / 4);
        const len = i % 4 ? 3 : 6;
        axis += `M${x} ${p.top}v${len}M${x} ${p.bottom}v${-len}`;
        if (i % 4 === 0) {
            if (i) grid += `M${x} ${p.top}V${p.bottom}`;
            if (i <= 8) text += `<text x="${x}" y="${p.bottom + 14}" text-anchor="middle">${i * 10}</text>`;
        }
    }
    for (let v = -1; ; v++) {
        const y = snap(p.zero - v * p.dy / 2);
        if (y < p.top) break;
        if (y > p.bottom) continue;
        const major = v % 2 === 0;
        axis += `M${p.x} ${y}h${major ? 6 : 3}`;
        if (major) {
            grid += `M${p.x} ${y}H${right}`;
            text += `<text x="${p.x - 5}" y="${y + 4}" text-anchor="end">${+(v / 2 * p.step).toFixed(1)}</text>`;
        }
    }
    if (p.exp) {
        text += `<text x="${p.x - 1}" y="${p.top - 3}">x10<tspan dy="-6">${p.exp}</tspan></text>`;
    }
    text += `<text class="unit" transform="translate(17 ${p.unit}) rotate(-90)">Vrms</text>`;
    if (p.freq) {
        text += `<text class="freq" x="${p.freq}" y="${p.bottom + 28}">Frequency (Hz)</text>`;
    }

    let curve = '';
    for (let i = 0; i <= 4800; i++) {
        const f = i * 0.05;
        const y = p.zero - level(f, p) / p.step * p.dy;
        curve += `${i ? 'L' : 'M'}${(p.x + f * p.dx / 40).toFixed(2)} ${y.toFixed(2)}`;
    }
    svg.innerHTML = `<path class="grid" d="${grid}"/><path class="axis" d="${axis}"/><path class="curve" d="${curve}"/>${text}`;
}

document.querySelectorAll('.plot').forEach(drawPlot);

// arrow tips: x, y, direction in degrees (0 points right)
const arrows = [
    [809, 399.5, 0], [915, 399.5, 0], [1003, 399.5, 0], [1090, 399.5, 0], [1334, 399.5, 0], [1334, 449.5, 0],
    [1334, 499.5, 0], [1334, 549.5, 0], [1334, 599.5, 0], [1334, 649.5, 0], [928, 556.5, 0], [1015, 556.5, 0],
    [1102, 556.5, 0], [1521, 337.5, 0], [1528, 443.5, 0], [1528, 549.5, 0], [1528, 643.5, 0], [1534, 749.5, 0],
    [1534, 856.5, 0], [1609, 337.5, 0], [1615, 443.5, 0], [1615, 549.5, 0], [1615, 643.5, 0], [1622, 749.5, 0],
    [1620, 856.5, 0], [998, 456.5, 180], [929, 499.5, 180], [985, 612.5, 180], [929, 662.5, 180],
    [828.5, 419, -90], [828.5, 537, 90], [828.5, 576, -90], [1059.5, 443, 90], [1059.5, 469, -90],
    [1159.5, 487, 90], [1159.5, 512, -90], [815, 413, -48], [811, 546, 28], [811, 567, -28]
];
document.getElementById('arrows').innerHTML = arrows.map(([x, y, a]) =>
    `<path d="M0 0l-10-5v10z" transform="translate(${x} ${y}) rotate(${a})"/>`).join('');

const junctions = [
    [970.5, 399.5], [1059.5, 399.5], [1159.5, 399.5], [1059.5, 424.5], [828.5, 456.5], [795.5, 499.5],
    [997.5, 556.5], [1059.5, 556.5], [1159.5, 556.5], [1059.5, 599.5], [1267.5, 649.5], [1282.5, 599.5],
    [1290.5, 556.5], [1290.5, 351.5], [1314.5, 399.5]
];
document.getElementById('junctions').innerHTML = junctions.map(([x, y]) =>
    `<circle cx="${x}" cy="${y}" r="3"/>`).join('');
```
